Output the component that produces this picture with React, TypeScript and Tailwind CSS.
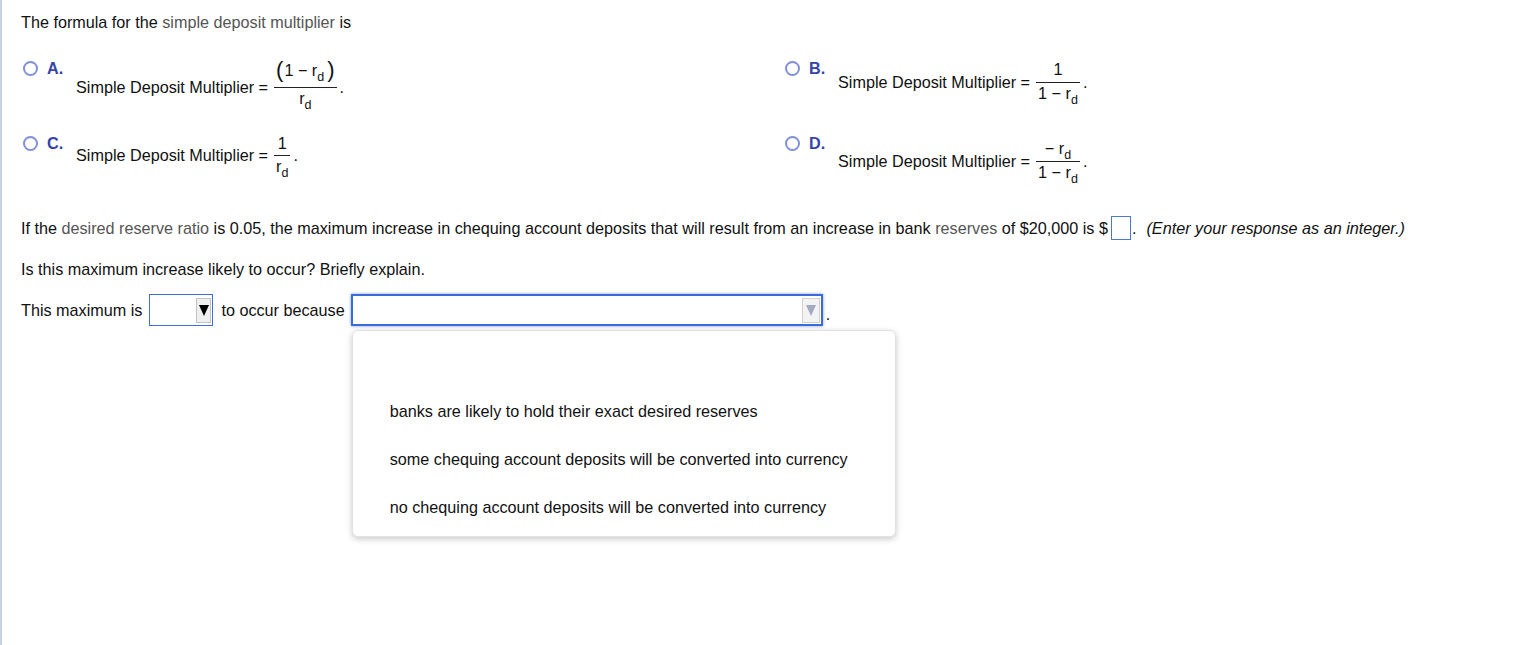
import React from "react";

const font = { fontFamily: '"Liberation Sans", Arial, sans-serif' };

function Rd() {
  return (
    <span className="inline-flex items-baseline">
      <span>r</span>
      <span className="relative top-[5px] text-[12.5px] leading-none">d</span>
    </span>
  );
}

type FracProps = {
  top: React.ReactNode;
  bottom: React.ReactNode;
  h: string;
  numPad: string;
};

function Frac({ top, bottom, h, numPad }: FracProps) {
  return (
    <span className="inline-flex flex-col ml-[6px] mr-[3px]">
      <span className={`${h} ${numPad} flex items-end justify-center px-[2px] leading-[18px]`}>{top}</span>
      <span className="border-t border-[#222]"></span>
      <span className={`${h} pt-[1px] flex items-start justify-center px-[2px] leading-[18px]`}>{bottom}</span>
    </span>
  );
}

type OptionProps = {
  letter: string;
  radioMt: string;
  formulaMt: string;
  children: React.ReactNode;
};

function Option({ letter, radioMt, formulaMt, children }: OptionProps) {
  return (
    <div className="flex items-start">
      <div className={`${radioMt} flex items-center h-[15px] w-[53px]`}>
        <span className="w-[15px] h-[15px] rounded-full border-2 border-[#8190da] bg-white"></span>
        <span className="ml-[9px] font-bold text-[#3445aa] leading-none">{letter}</span>
      </div>
      <div className={`${formulaMt} flex items-center`}>
        <span>Simple Deposit Multiplier =</span>
        {children}
        <span>.</span>
      </div>
    </div>
  );
}

function Arrow({ color }: { color: string }) {
  return (
    <svg width="10" height="11" viewBox="0 0 10 11">
      <path d="M0 0 H10 L5 11 Z" fill={color} />
    </svg>
  );
}

export default function App() {
  return (
    <div className="min-h-[645px] bg-white border-l-2 border-[#c9d0e2] text-[16.2px] text-[#111] leading-[19px]" style={font}>
      <div className="pl-[19px] pt-[13px]">
        <p>
          The formula for the <span className="text-[#555]">simple deposit multiplier</span> is
        </p>

        <div className="grid grid-cols-[762px_1fr] grid-rows-[77px_62px] pl-[2px] mt-[25px]">
          <Option letter="A." radioMt="mt-[4px]" formulaMt="mt-0">
            <Frac
              h="h-[30px]"
              numPad="pb-[5px]"
              top={
                <span className="inline-flex items-center">
                  <span className="text-[22px] leading-[24px]">(</span>
                  <span className="ml-[1px]">1&nbsp;−&nbsp;</span>
                  <Rd />
                  <span className="text-[22px] leading-[24px] ml-[3px]">)</span>
                </span>
              }
              bottom={<Rd />}
            />
          </Option>
          <Option letter="B." radioMt="mt-[4px]" formulaMt="mt-[3px]">
            <Frac
              h="h-[22px]"
              numPad="pb-[4px]"
              top={<span>1</span>}
              bottom={
                <span className="inline-flex">
                  1&nbsp;−&nbsp;<Rd />
                </span>
              }
            />
          </Option>
          <Option letter="C." radioMt="mt-[2px]" formulaMt="mt-0">
            <Frac h="h-[21px]" numPad="pb-[3px]" top={<span>1</span>} bottom={<Rd />} />
          </Option>
          <Option letter="D." radioMt="mt-[2px]" formulaMt="mt-[5px]">
            <Frac
              h="h-[22px]"
              numPad="pb-[4px]"
              top={
                <span className="inline-flex">
                  −&nbsp;<Rd />
                </span>
              }
              bottom={
                <span className="inline-flex">
                  1&nbsp;−&nbsp;<Rd />
                </span>
              }
            />
          </Option>
        </div>

        <p className="mt-[20px] flex items-center">
          <span>
            If the <span className="text-[#555]">desired reserve ratio</span> is 0.05, the maximum increase in chequing
            account deposits that will result from an increase in bank <span className="text-[#555]">reserves</span> of
            $20,000 is $
          </span>
          <span className="inline-block w-[20px] h-[24px] border border-[#4a78d4] ml-[3px]"></span>
          <span className="ml-[1px]">.</span>
          <span className="italic ml-[10px]">(Enter your response as an integer.)</span>
        </p>

        <p className="mt-[20px]">Is this maximum increase likely to occur? Briefly explain.</p>

        <div className="mt-[15px] flex items-center">
          <span>This maximum is</span>
          <span className="ml-[7px] w-[64px] h-[32px] border border-[#3f6fd6] flex items-center justify-end pr-[1px]">
            <span className="w-[15px] h-[25px] bg-[#efefef] border border-[#c4c4c4] flex items-center justify-center">
              <Arrow color="#000" />
            </span>
          </span>
          <span className="ml-[8px]">to occur because</span>
          <div className="relative ml-[6px]">
            <span className="w-[472px] h-[32px] border-2 border-[#3b6bd6] shadow-[0_0_3px_#7b9be6] flex items-center justify-end pr-[1px]">
              <span className="w-[18px] h-[25px] bg-[#f3f3f3] border border-[#d0d0d0] flex items-center justify-center">
                <Arrow color="#a3abc3" />
              </span>
            </span>
            <div className="absolute left-[1px] top-[36px] w-[544px] h-[207px] bg-white rounded-[6px] border border-[#e2e2e2] shadow-[0_2px_6px_rgba(0,0,0,0.22)] pt-[71px] pl-[37px] z-10">
              <div className="h-[48px]">banks are likely to hold their exact desired reserves</div>
              <div className="h-[48px]">some chequing account deposits will be converted into currency</div>
              <div className="h-[48px]">no chequing account deposits will be converted into currency</div>
            </div>
          </div>
          <span className="ml-[3px] self-end mb-[4px] leading-none">.</span>
        </div>
      </div>
    </div>
  );
}
